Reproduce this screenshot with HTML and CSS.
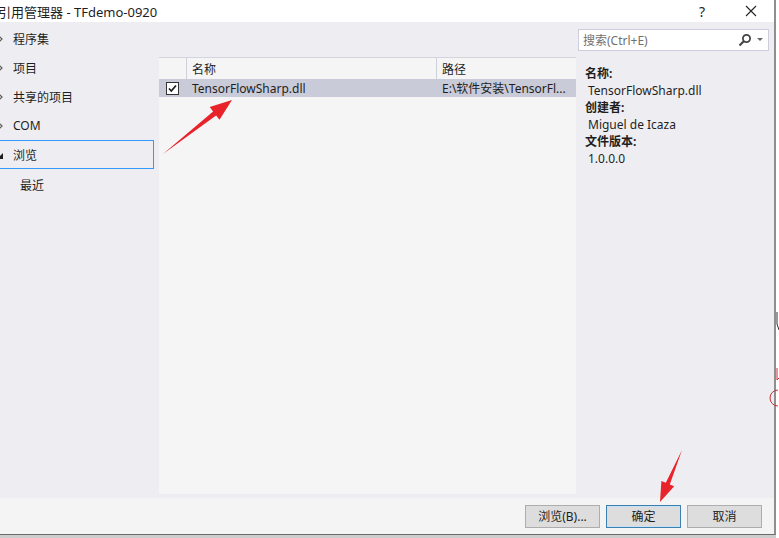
FILE: index.html
```html
<!DOCTYPE html>
<html lang="zh-CN">
<head>
    <meta charset="UTF-8">
    <title>引用管理器 - TFdemo-0920</title>
    <link rel="stylesheet" href="styles.css">
</head>
<body>
    <div class="window">
        <div class="titlebar">
            <span class="title">引用管理器 - TFdemo-0920</span>
            <span class="help">?</span>
            <svg class="close" viewBox="0 0 12 12" width="12" height="12">
                <path d="M1 1L11 11M11 1L1 11" stroke="#222" stroke-width="1.1" fill="none" />
            </svg>
        </div>
        <div class="main">
            <div class="sidebar">
                <div class="nav-item"><svg class="chev" viewBox="0 0 6 10"><path d="M0 1l4 4-4 4" stroke="#555" stroke-width="1.2" fill="none" /></svg>程序集</div>
                <div class="nav-item"><svg class="chev" viewBox="0 0 6 10"><path d="M0 1l4 4-4 4" stroke="#555" stroke-width="1.2" fill="none" /></svg>项目</div>
                <div class="nav-item"><svg class="chev" viewBox="0 0 6 10"><path d="M0 1l4 4-4 4" stroke="#555" stroke-width="1.2" fill="none" /></svg>共享的项目</div>
                <div class="nav-item"><svg class="chev" viewBox="0 0 6 10"><path d="M0 1l4 4-4 4" stroke="#555" stroke-width="1.2" fill="none" /></svg>COM</div>
                <div class="nav-item active"><svg class="chev" viewBox="0 0 6 10"><path d="M5 3v6H-1z" fill="#1e1e1e" /></svg>浏览</div>
                <div class="nav-sub">最近</div>
            </div>
            <div class="list">
                <div class="list-head">
                    <div class="col-check"></div>
                    <div class="col-name">名称</div>
                    <div class="col-path">路径</div>
                </div>
                <div class="list-row selected">
                    <div class="col-check">
                        <span class="checkbox">
                            <svg viewBox="0 0 11 11" width="11" height="11"><path d="M2 5.5l2.3 2.5L9 2.5" stroke="#1e1e1e" stroke-width="1.8" fill="none" /></svg>
                        </span>
                    </div>
                    <div class="col-name">TensorFlowSharp.dll</div>
                    <div class="col-path">E:\软件安装\TensorFl...</div>
                </div>
            </div>
            <div class="details">
                <div class="search">
                    <span class="search-text">搜索(Ctrl+E)</span>
                    <svg class="search-icon" viewBox="0 0 14 14" width="14" height="14">
                        <circle cx="8.5" cy="5.5" r="3.6" stroke="#444" stroke-width="1.8" fill="none" />
                        <path d="M6 8L1.5 12.5" stroke="#444" stroke-width="2.2" />
                    </svg>
                    <svg class="drop" viewBox="0 0 6 4" width="6" height="4"><path d="M0 0h6L3 3z" fill="#666" /></svg>
                </div>
                <div class="info">
                    <div class="label">名称:</div>
                    <div class="value">TensorFlowSharp.dll</div>
                    <div class="label">创建者:</div>
                    <div class="value">Miguel de Icaza</div>
                    <div class="label">文件版本:</div>
                    <div class="value">1.0.0.0</div>
                </div>
            </div>
        </div>
        <div class="footer">
            <button class="btn">浏览(B)...</button>
            <button class="btn default">确定</button>
            <button class="btn">取消</button>
        </div>
    </div>
    <div class="shadow"></div>

    <!-- red annotation arrows drawn over the screenshot -->
    <svg class="marks" viewBox="0 0 779 538" width="779" height="538">
        <polygon points="163,154 213.1,111.4 209.7,107.1 232,100 219.5,119.7 216.1,115.4" fill="#e8232a" />
        <polygon points="682,450 669.8,484.5 674.2,486.3 660,502 661.4,480.9 665.8,482.7" fill="#e8232a" />
        <path d="M777 312v12M777 324l2 6" stroke="#333" stroke-width="1" fill="none" />
        <path d="M777 368v12M777 380l2-2M778 390a8 8 0 0 0 0 16" stroke="#c33" stroke-width="1" fill="none" />
    </svg>
</body>
</html>
```

FILE: styles.css
```css
body {
    margin: 0;
    background: #fff;
    font-family: "Noto Sans", "Noto Sans CJK SC", sans-serif;
    font-size: 12px;
    color: #1e1e1e;
    overflow: hidden;
}
.window {
    width: 774px;
    border-right: 2px solid #8f8f8f;
    border-bottom: 1px solid #6a6a6a;
}
.titlebar {
    height: 22px;
    background: #fff;
    display: flex;
    align-items: center;
}
.title {
    margin-left: -2px;
    font-size: 13px;
    flex-grow: 1;
}
.help {
    font-size: 14px;
    margin-right: 40px;
}
.close {
    margin-right: 17px;
}
.main {
    display: flex;
    height: 476px;
    background: #eeeef2;
}
.sidebar {
    width: 159px;
    padding-top: 2px;
}
.nav-item {
    width: 155px;
    height: 29px;
    display: flex;
    align-items: center;
    margin-left: -1px;
    border: 1px solid transparent;
    box-sizing: border-box;
}
.nav-item.active {
    border-color: #3399ff;
}
.chev {
    width: 6px;
    height: 10px;
    margin-left: -2px;
    margin-right: 9px;
}
.nav-sub {
    height: 29px;
    padding-top: 3px;
    box-sizing: border-box;
    display: flex;
    align-items: center;
    padding-left: 20px;
}
.list {
    width: 417px;
    margin-top: 35px;
    height: 437px;
    background: #f5f5f5;
}
.list-head,
.list-row {
    display: flex;
}
.list-head {
    height: 22px;
    border-top: 1px solid #d4d4de;
    box-sizing: border-box;
}
.list-head div {
    border-right: 1px solid #cfd0da;
}
.list-row {
    height: 18px;
}
.list-row.selected {
    background: #cacbd8;
}
.col-check {
    width: 28px;
    display: flex;
    align-items: center;
    justify-content: center;
    box-sizing: border-box;
    padding-right: 2px;
}
.col-name {
    width: 250px;
    padding-left: 5px;
    box-sizing: border-box;
    display: flex;
    align-items: center;
}
.col-path {
    flex-grow: 1;
    padding-left: 5px;
    display: flex;
    align-items: center;
    white-space: nowrap;
    overflow: hidden;
}
.list-head .col-path {
    border-right: none;
}
.checkbox {
    width: 13px;
    height: 13px;
    border: 1px solid #333;
    background: #fff;
    box-sizing: border-box;
    display: flex;
    align-items: center;
    justify-content: center;
}
.details {
    width: 198px;
}
.search {
    margin: 7px 0 0 2px;
    width: 191px;
    height: 22px;
    background: #fff;
    border: 1px solid #cccedb;
    box-sizing: border-box;
    display: flex;
    align-items: center;
}
.search-text {
    flex-grow: 1;
    color: #717171;
    padding-left: 4px;
}
.search-icon {
    margin-right: 5px;
}
.drop {
    margin-right: 5px;
}
.info {
    padding: 14px 0 0 9px;
    line-height: 17px;
}
.label {
    font-weight: bold;
}
.value {
    padding-left: 3px;
}
.footer {
    height: 36px;
    background: #f4f4f4;
    display: flex;
    align-items: center;
    justify-content: flex-end;
    gap: 6px;
    padding-right: 12px;
}
.btn {
    width: 75px;
    height: 23px;
    background: #dddddd;
    border: 1px solid #adadad;
    font-family: "Noto Sans", "Noto Sans CJK SC", sans-serif;
    font-size: 12px;
    color: #1e1e1e;
    padding: 0;
}
.btn.default {
    border-color: #3c7fb1;
    box-shadow: inset 0 0 0 1px #c6e2f7;
}
.shadow {
    height: 4px;
    background: #cdcdcd;
    width: 776px;
}
.marks {
    position: absolute;
    left: 0;
    top: 0;
    pointer-events: none;
}
```
